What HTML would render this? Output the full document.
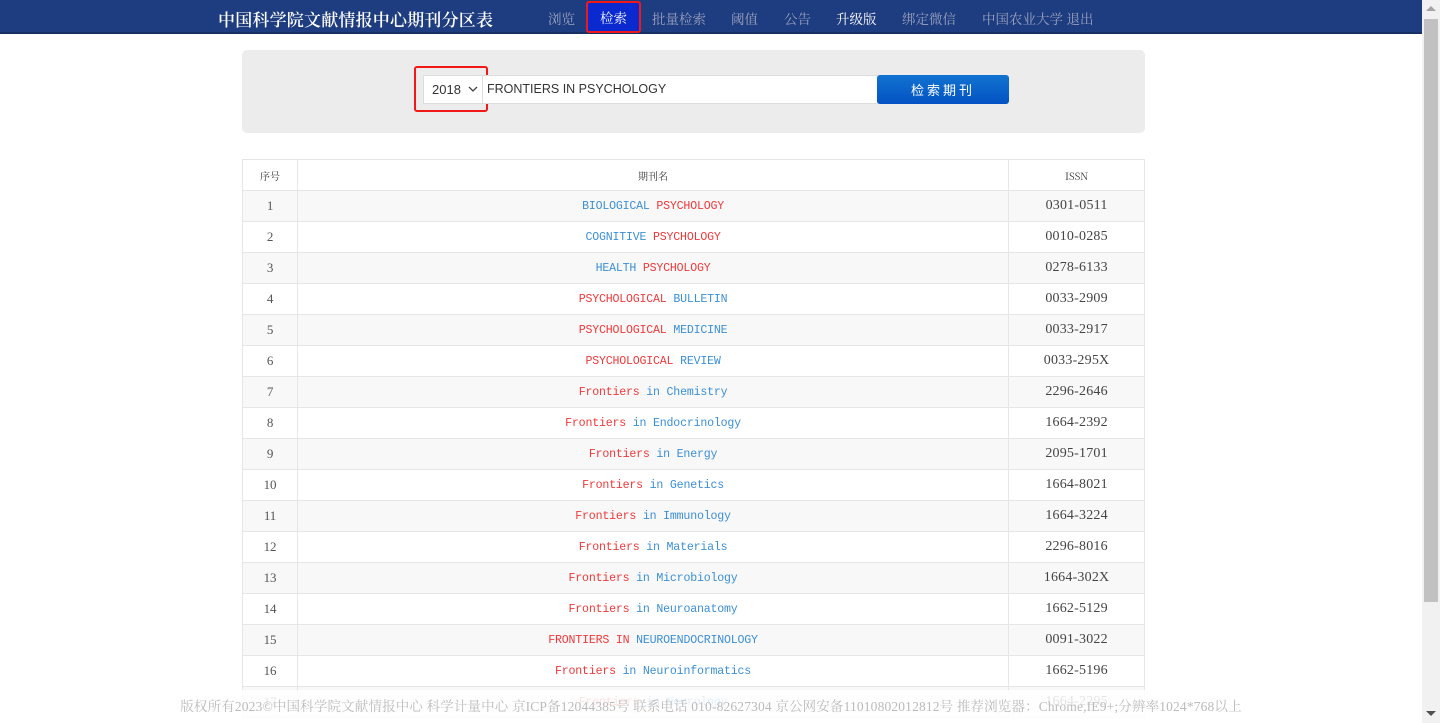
<!DOCTYPE html>
<html><head><meta charset="utf-8"><style>
*{margin:0;padding:0;box-sizing:border-box}
body{width:1440px;height:723px;overflow:hidden;background:#fff;font-family:"Liberation Sans","Noto Sans CJK SC",sans-serif;position:relative}
.nav{position:absolute;left:0;top:0;width:1422px;height:34px;background:#1e3c80;border-bottom:2px solid #173064}
.title{position:absolute;left:218px;top:6px;color:#fff;font-size:17px;font-family:"Noto Serif CJK SC","Liberation Serif",serif;font-weight:600;letter-spacing:0.2px}
.ni{position:absolute;top:8px;color:#9aa3bd;font-size:13.5px;font-family:"Noto Serif CJK SC",serif}
.act{position:absolute;left:586px;top:1px;width:55px;height:32px;background:#0a2ad0;border:2px solid #f01818;border-radius:3px;color:#fff;font-size:13.5px;text-align:center;line-height:28px;font-family:"Noto Serif CJK SC",serif}
.box{position:absolute;left:242px;top:50px;width:903px;height:83px;background:#ececec;border-radius:5px}
.sel{position:absolute;left:423px;top:75px;width:60px;height:29px;background:#fff;border:1px solid #ddd;font-size:13px;color:#333;line-height:27px;padding-left:8px}
.selred{position:absolute;left:414px;top:66px;width:74px;height:46px;border:2px solid #f01818;border-radius:3px}
.inp{position:absolute;left:483px;top:75px;width:395px;height:29px;background:#fff;border:1px solid #ddd;border-left:none;font-size:12.5px;color:#333;line-height:27px;padding-left:4px}
.btn{position:absolute;left:877px;top:75px;width:132px;height:29px;background:linear-gradient(#1273d0,#0452c4);border-radius:3px;color:#fff;font-size:13px;text-align:center;line-height:29px;letter-spacing:3px;font-family:"Noto Sans CJK SC",sans-serif}
table{position:absolute;left:242px;top:159px;width:903px;border-collapse:collapse;font-family:"Liberation Mono","Noto Serif CJK SC",monospace;font-size:11.6px;color:#555}
td,th{border:1px solid #e6e6e6;height:31px;text-align:center;padding:0}
th{font-weight:normal;font-size:10px;color:#333;font-family:"Noto Serif CJK SC",serif}
tbody tr:nth-child(odd){background:#f8f8f8}
td.n{font-family:"Liberation Serif",serif;font-size:13px}
td.i{font-family:"Liberation Serif",serif;font-size:14px;color:#444;letter-spacing:0.2px}
.r{color:#f0383a}.b{color:#3b8fd6}
td{letter-spacing:-0.2px}
.foot{position:absolute;left:0;top:690px;width:1422px;height:33px;background:rgba(255,255,255,0.85);text-align:center;font-size:13.5px;color:#bbb;line-height:33px;padding-left:0;font-family:"Liberation Serif","Noto Serif CJK SC",serif;letter-spacing:0.15px}
.sb{position:absolute;left:1422px;top:0;width:18px;height:723px;background:#f1f1f1}
.th{position:absolute;left:1424px;top:19px;width:14px;height:583px;background:#c1c1c1}
</style></head><body>
<div class="nav">
<div class="title">中国科学院文献情报中心期刊分区表</div>
<span class="ni" style="left:548px">浏览</span>
<div class="act">检索</div>
<span class="ni" style="left:652px">批量检索</span>
<span class="ni" style="left:731px">阈值</span>
<span class="ni" style="left:784px">公告</span>
<span class="ni" style="left:836px;color:#fff">升级版</span>
<span class="ni" style="left:902px">绑定微信</span>
<span class="ni" style="left:982px">中国农业大学 退出</span>
</div>
<div class="box"></div>
<div class="sel">2018 <svg style="position:absolute;left:44px;top:10px" width="10" height="7"><path d="M1 1 L5 5 L9 1" stroke="#444" stroke-width="1.3" fill="none"/></svg></div>
<div class="selred"></div>
<div class="inp">FRONTIERS IN PSYCHOLOGY</div>
<div class="btn">检索期刊</div>
<table>
<colgroup><col style="width:55px"><col style="width:712px"><col style="width:136px"></colgroup>
<thead><tr style="background:#fff"><th>序号</th><th>期刊名</th><th>ISSN</th></tr></thead>
<tbody>
<tr><td class="n">1</td><td><span class="b">BIOLOGICAL</span> <span class="r">PSYCHOLOGY</span></td><td class="i">0301-0511</td></tr>
<tr><td class="n">2</td><td><span class="b">COGNITIVE</span> <span class="r">PSYCHOLOGY</span></td><td class="i">0010-0285</td></tr>
<tr><td class="n">3</td><td><span class="b">HEALTH</span> <span class="r">PSYCHOLOGY</span></td><td class="i">0278-6133</td></tr>
<tr><td class="n">4</td><td><span class="r">PSYCHOLOGICAL</span> <span class="b">BULLETIN</span></td><td class="i">0033-2909</td></tr>
<tr><td class="n">5</td><td><span class="r">PSYCHOLOGICAL</span> <span class="b">MEDICINE</span></td><td class="i">0033-2917</td></tr>
<tr><td class="n">6</td><td><span class="r">PSYCHOLOGICAL</span> <span class="b">REVIEW</span></td><td class="i">0033-295X</td></tr>
<tr><td class="n">7</td><td><span class="r">Frontiers</span> <span class="b">in Chemistry</span></td><td class="i">2296-2646</td></tr>
<tr><td class="n">8</td><td><span class="r">Frontiers</span> <span class="b">in Endocrinology</span></td><td class="i">1664-2392</td></tr>
<tr><td class="n">9</td><td><span class="r">Frontiers</span> <span class="b">in Energy</span></td><td class="i">2095-1701</td></tr>
<tr><td class="n">10</td><td><span class="r">Frontiers</span> <span class="b">in Genetics</span></td><td class="i">1664-8021</td></tr>
<tr><td class="n">11</td><td><span class="r">Frontiers</span> <span class="b">in Immunology</span></td><td class="i">1664-3224</td></tr>
<tr><td class="n">12</td><td><span class="r">Frontiers</span> <span class="b">in Materials</span></td><td class="i">2296-8016</td></tr>
<tr><td class="n">13</td><td><span class="r">Frontiers</span> <span class="b">in Microbiology</span></td><td class="i">1664-302X</td></tr>
<tr><td class="n">14</td><td><span class="r">Frontiers</span> <span class="b">in Neuroanatomy</span></td><td class="i">1662-5129</td></tr>
<tr><td class="n">15</td><td><span class="r">FRONTIERS IN</span> <span class="b">NEUROENDOCRINOLOGY</span></td><td class="i">0091-3022</td></tr>
<tr><td class="n">16</td><td><span class="r">Frontiers</span> <span class="b">in Neuroinformatics</span></td><td class="i">1662-5196</td></tr>
<tr><td class="n">17</td><td><span class="r">Frontiers</span> <span class="b">in Neurology</span></td><td class="i">1664-2295</td></tr>
</tbody></table>
<div class="foot">版权所有2023©中国科学院文献情报中心 科学计量中心 京ICP备12044385号 联系电话 010-82627304 京公网安备11010802012812号 推荐浏览器：Chrome,IE9+;分辨率1024*768以上</div>
<div class="sb"></div><div class="th"></div>
<svg style="position:absolute;left:1426px;top:5px" width="10" height="7"><path d="M0 6 L5 1 L10 6Z" fill="#a3a3a3"/></svg>
<svg style="position:absolute;left:1426px;top:710px" width="10" height="7"><path d="M0 1 L5 6 L10 1Z" fill="#505050"/></svg>
</body></html>
